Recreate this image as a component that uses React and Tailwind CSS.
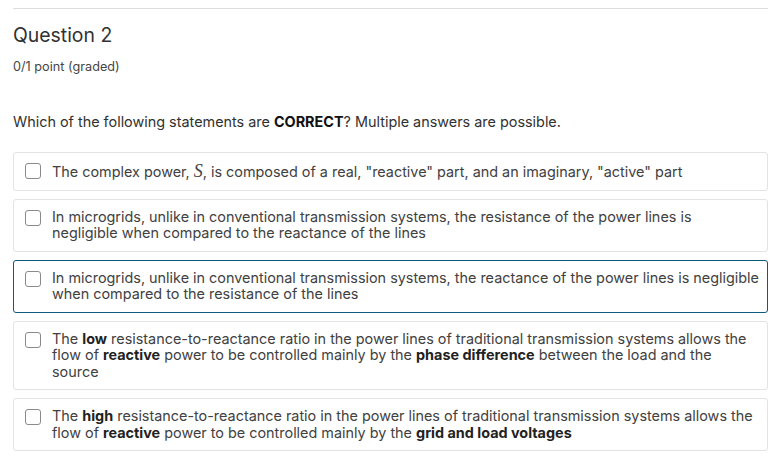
import React from "react";

const options = [
  {
    id: 1,
    content: (
      <>
        The complex power,{" "}
        <span className="italic text-[18px] leading-none" style={{ fontFamily: '"Liberation Serif", serif' }}>
          S
        </span>
        , is composed of a real, "reactive" part, and an imaginary, "active" part
      </>
    ),
  },
  {
    id: 2,
    content: (
      <>
        In microgrids, unlike in conventional transmission systems, the resistance of the power lines is
        <br />
        negligible when compared to the reactance of the lines
      </>
    ),
  },
  {
    id: 3,
    focused: true,
    content: (
      <>
        In microgrids, unlike in conventional transmission systems, the reactance of the power lines is negligible
        when compared to the resistance of the lines
      </>
    ),
  },
  {
    id: 4,
    content: (
      <>
        The <b>low</b> resistance-to-reactance ratio in the power lines of traditional transmission systems allows the
        flow of <b>reactive</b> power to be controlled mainly by the <b>phase difference</b> between the load and the
        source
      </>
    ),
  },
  {
    id: 5,
    content: (
      <>
        The <b>high</b> resistance-to-reactance ratio in the power lines of traditional transmission systems allows the
        flow of <b>reactive</b> power to be controlled mainly by the <b>grid and load voltages</b>
      </>
    ),
  },
];

export default function App() {
  return (
    <div className="bg-white min-h-screen px-[13px] pt-2 text-[#414141]" style={{ fontFamily: "Inter, sans-serif" }}>
      <div className="border-t border-[#dddddd]" />
      <h2 className="text-[19.4px] leading-6 font-normal text-[#313131] mt-[14px]">Question 2</h2>
      <p className="text-[12.7px] leading-4 text-[#454545] mt-[12px]">0/1 point (graded)</p>

      <p className="text-[14.4px] leading-[18px] text-[#313131] mt-[38px]">
        Which of the following statements are <b className="font-bold text-[#111]">CORRECT</b>? Multiple answers are possible.
      </p>

      <div className="mt-[21px] flex flex-col gap-[8px]">
        {options.map((o) => (
          <label
            key={o.id}
            className={`flex items-start rounded-[3px] border bg-white pl-[11px] pr-[6px] py-[9px] ${
              o.focused ? "border-[#0d5c7d]" : "border-[#e3e3e3]"
            }`}
          >
            <span className="mt-[1px] h-[16px] w-[16px] shrink-0 rounded-[3px] border border-[#8a8a8a] bg-white" />
            <span className="ml-[11px] text-[14.4px] leading-[16.5px] [&_b]:font-bold [&_b]:text-[#222]">
              {o.content}
            </span>
          </label>
        ))}
      </div>
    </div>
  );
}
